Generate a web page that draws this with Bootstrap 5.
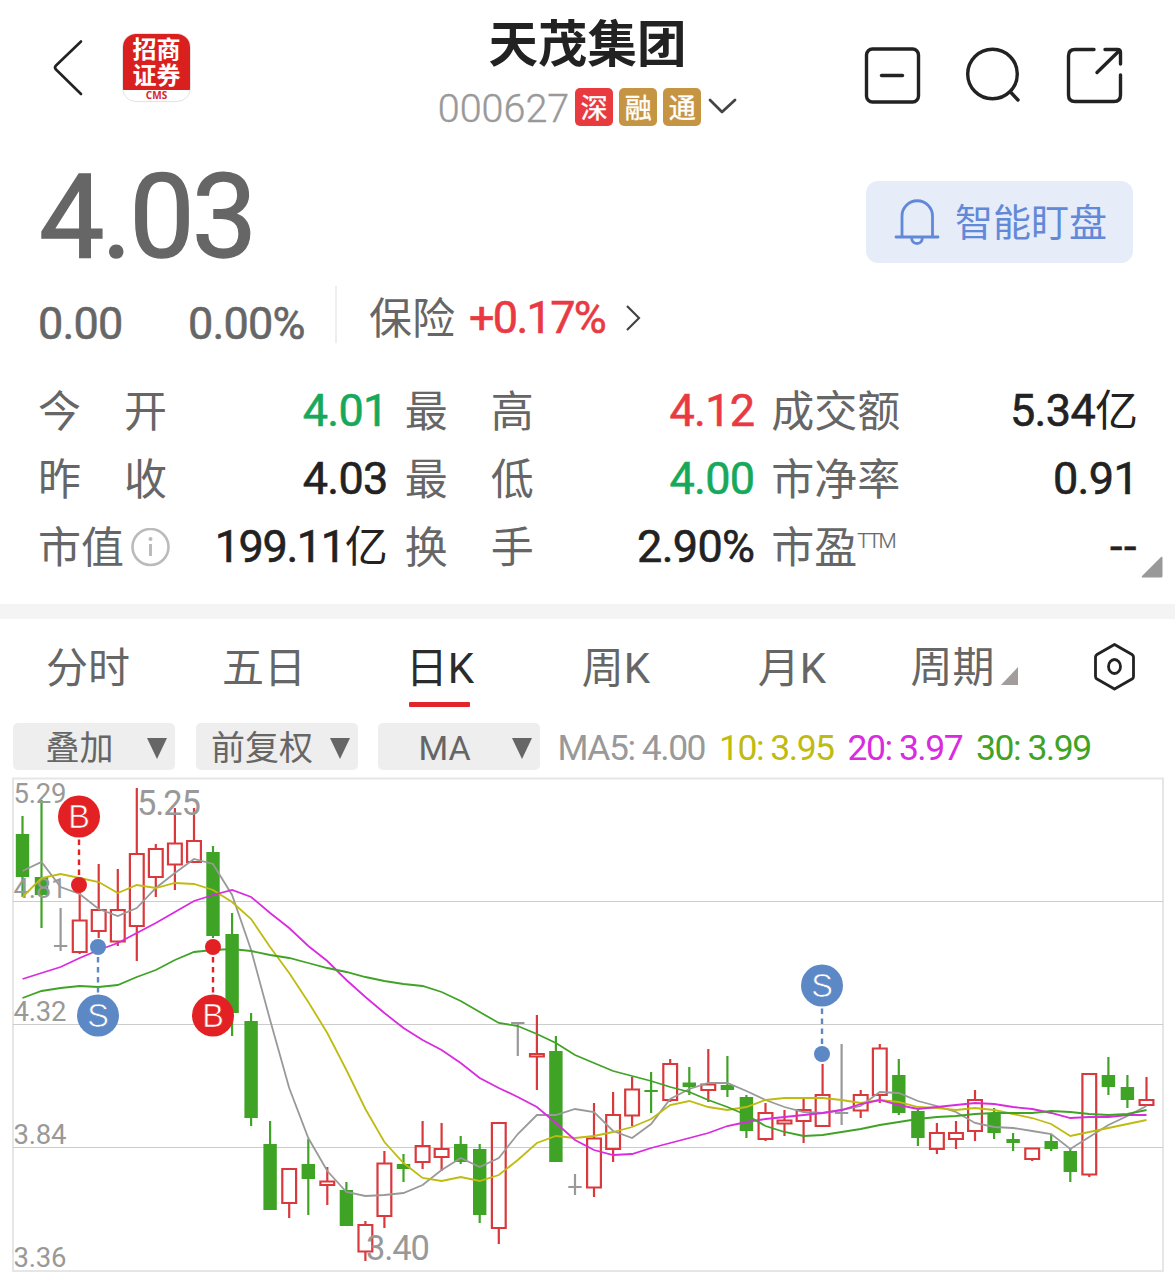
<!DOCTYPE html>
<html lang="zh-CN">
<head>
<meta charset="utf-8">
<meta name="viewport" content="width=device-width, initial-scale=1">
<title>天茂集团 000627</title>
<link rel="stylesheet" href="https://cdn.jsdelivr.net/npm/bootstrap@5.3.0/dist/css/bootstrap.min.css">
<style>
body{font-family:Roboto,"Noto Sans CJK SC",sans-serif;color:#222;background:#fff;width:1175px;height:1275px;overflow:hidden;line-height:1}
svg{display:block;flex:none}
.ink-gray{color:#666}.ink-up{color:#e93a43}.ink-down{color:#17a95b}
.topbar{display:grid;grid-template-columns:1fr auto 1fr;height:150px}
.back-area{padding:33px 0 0 50px;gap:37px}
.app-logo{width:69px;height:69px;border-radius:14px;background:#fff;border:1px solid #e3e3e3;overflow:hidden}
.logo-red{background:#da1f1f;color:#fff;height:57px;font-weight:700;font-size:24px;line-height:26px;padding-top:4px;text-align:center;margin:-1px -1px 0}
.logo-cms{color:#d8262b;font:700 10px/10px "Open Sans",sans-serif;text-align:center}
.stock-name{font-size:49.5px;line-height:50px;font-weight:700;padding-top:20px;margin:0}
.stock-code{font-size:39.5px;color:#999;line-height:38px;font-weight:300;-webkit-text-stroke:.4px #999;padding-top:2px;height:38px}
.code-line{gap:6px;margin-top:18px}
.tag{width:38px;height:38px;border-radius:5px;background:#c69544;color:#fff;font-size:27px;line-height:42px;text-align:center;-webkit-text-stroke:.4px #fff}
.tag-sz{background:#e93a40}
.tools{padding:46px 51px 0 0;gap:43px}
.price-row{height:130px;padding:0 42px 0 39px}
.price{font-size:116.5px;line-height:132px;letter-spacing:-3px;color:#666;-webkit-text-stroke:1.4px #666;padding-top:1px}
.watch-btn{width:267px;height:82px;border-radius:12px;background:#e6ecf8;color:#6288d8;border:0;font-size:38px;margin-top:31px;padding:0 0 0 28px;gap:15px}
.watch-btn span{padding-top:2px}
.change-row{height:64px;margin-top:4px;padding-left:38px;font-size:45px;line-height:64px;letter-spacing:-.8px}
.chg-a{width:150px}.chg-b{width:147px;white-space:nowrap}
.chg-a,.chg-b{padding-top:16px}
.chg-a,.chg-b,.sector-chg,.val{-webkit-text-stroke:.6px currentColor}
.vline{width:2px;height:57px;background:#eee;margin-bottom:4px}
.sector{margin-left:32px;padding-top:5px;font-size:43px;letter-spacing:0}
.sector-chg{margin:4px 20px 0 14px;letter-spacing:-1.7px}
.quote{padding:31px 37px 0 38px;height:256px;position:relative}
.cell-q{height:68px;width:33.3333%;padding-right:17px}
.cell-q:nth-child(3n){padding-right:0}
.lab{width:129px;height:63px;font-size:43px;color:#666;line-height:60px;padding-top:3px;white-space:nowrap}
.val{font-size:45px;line-height:60px;letter-spacing:-.7px;padding-top:2px}
.val.tight{letter-spacing:-1.4px}
.val.dashes{letter-spacing:1.5px}
.val i{font-style:normal;font-size:43px;letter-spacing:0;-webkit-text-stroke:0}
.ttm{font-size:21px;font-weight:300;line-height:21px;margin-top:-13px;letter-spacing:-2px;-webkit-text-stroke:.2px #666}
.fold{position:absolute;right:12px;bottom:26px}
.gap-band{height:15px;background:#f4f4f4}
.tabs-k{height:104px}
.tab-k{width:176px;height:97px;font-size:42px;color:#666;line-height:99px;text-align:center;position:relative}
.tab-k.on{color:#2b2b2b}
.tab-k.on::after{content:"";position:absolute;left:57px;bottom:9px;width:61px;height:5px;background:#e1262b;border-radius:1px}
.tri{margin:17px 0 0 6px}
.filters{height:54px;padding-left:13px;align-items:flex-start}
.pick{width:162px;height:47px;border-radius:5px;background:#eee;color:#666;font-size:34px;line-height:47px;margin-right:20.5px;padding-right:7px}
.pick span{flex:1;text-align:center;padding-top:3px}
.pick svg{margin-top:2px}
.legend-ma{font-size:35.5px;line-height:50px;letter-spacing:-1.5px;white-space:nowrap;gap:14px;margin-left:-3px}
</style>
<script src="https://cdn.jsdelivr.net/npm/bootstrap@5.3.0/dist/js/bootstrap.bundle.min.js"></script>
</head>
<body>
<header class="topbar">
  <div class="back-area d-flex align-items-start">
    <svg width="35" height="69" viewBox="0 0 35 69" fill="none" stroke="#222" stroke-width="2.6" stroke-linecap="round"><path d="M31 8.500L6 32.500Q4 34.500 6 36.500L31 61"/></svg>
    <div class="app-logo"><div class="logo-red">招商<br>证券</div><div class="logo-cms">CMS</div></div>
  </div>
  <div class="d-flex flex-column align-items-center">
    <h1 class="stock-name">天茂集团</h1>
    <div class="code-line d-flex align-items-center">
      <span class="stock-code">000627</span><span class="tag tag-sz">深</span><span class="tag">融</span><span class="tag">通</span>
      <svg width="30" height="18" viewBox="0 0 30 18" fill="none" stroke="#444" stroke-width="2.800" stroke-linecap="round" stroke-linejoin="round"><path d="M3 2L15 14L28 2"/></svg>
    </div>
  </div>
  <div class="tools d-flex justify-content-end align-items-start">
    <svg width="58" height="58" viewBox="0 0 58 58" fill="none" stroke="#222" stroke-width="3.400" stroke-linecap="round"><rect x="2.500" y="3" width="52" height="53" rx="6"/><path d="M17.500 29.500H38.500"/></svg>
    <svg width="58" height="58" viewBox="0 0 58 58" fill="none" stroke="#222" stroke-width="3.400" stroke-linecap="round"><circle cx="27.500" cy="28" r="24.800"/><path d="M45.500 46L53 54"/></svg>
    <svg width="58" height="58" viewBox="0 0 58 58" fill="none" stroke="#222" stroke-width="3.400" stroke-linecap="round" stroke-linejoin="round"><path d="M28 3.500H9Q2.500 3.500 2.500 10V49Q2.500 55.500 9 55.500H48Q54.500 55.500 54.500 49V29M39 3.500H51.500Q54.500 3.500 54.500 6.500V18M53 5L31 26.500"/></svg>
  </div>
</header>
<section class="price-row d-flex justify-content-between align-items-start">
  <div class="price">4.03</div>
  <button class="watch-btn d-flex align-items-center">
    <svg width="46" height="50" viewBox="0 0 46 50" fill="none" stroke="#6288d8" stroke-width="2.800" stroke-linecap="round"><path d="M2 40H44M8 40V19A15 15 0 0 1 38.500 19V40M17.500 40.500Q18 46.500 23 46.500T28.500 40.500"/></svg>
    <span>智能盯盘</span>
  </button>
</section>
<section class="change-row d-flex align-items-center ink-gray">
  <div class="chg-a">0.00</div><div class="chg-b">0.00%</div><div class="vline"></div>
  <div class="sector">保险</div><div class="sector-chg ink-up">+0.17%</div>
  <svg class="mt-1" width="16" height="28" viewBox="0 0 16 28" fill="none" stroke="#444" stroke-width="2.200"><path d="M2 2L14 14L2 26"/></svg>
</section>
<section class="quote d-flex flex-wrap align-content-start">
  <div class="cell-q d-flex justify-content-between"><div class="lab d-flex justify-content-between"><span>今</span><span>开</span></div><div class="val ink-down">4.01</div></div>
  <div class="cell-q d-flex justify-content-between"><div class="lab d-flex justify-content-between"><span>最</span><span>高</span></div><div class="val ink-up">4.12</div></div>
  <div class="cell-q d-flex justify-content-between"><div class="lab">成交额</div><div class="val">5.34<i>亿</i></div></div>
  <div class="cell-q d-flex justify-content-between"><div class="lab d-flex justify-content-between"><span>昨</span><span>收</span></div><div class="val">4.03</div></div>
  <div class="cell-q d-flex justify-content-between"><div class="lab d-flex justify-content-between"><span>最</span><span>低</span></div><div class="val ink-down">4.00</div></div>
  <div class="cell-q d-flex justify-content-between"><div class="lab">市净率</div><div class="val">0.91</div></div>
  <div class="cell-q d-flex justify-content-between"><div class="lab d-flex align-items-center"><span>市值</span>
    <svg width="42" height="40" viewBox="0 0 42 40" class="ms-1" fill="none" stroke="#bbb" stroke-width="2.600"><circle cx="22.500" cy="19" r="18"/><path d="M22.500 16V28" stroke-width="3"/><circle cx="22.500" cy="11" r="2" fill="#bbb" stroke="none"/></svg></div><div class="val tight">199.11<i>亿</i></div></div>
  <div class="cell-q d-flex justify-content-between"><div class="lab d-flex justify-content-between"><span>换</span><span>手</span></div><div class="val">2.90%</div></div>
  <div class="cell-q d-flex justify-content-between"><div class="lab d-flex align-items-center"><span>市盈</span><span class="ttm">TTM</span></div><div class="val dashes">--</div></div>
  <svg class="fold" width="22" height="22" viewBox="0 0 22 22"><path d="M20 1Q21.500 0 21.500 2V20Q21.500 21.500 20 21.500H1.500Q0 21.500 1 20Z" fill="#999"/></svg>
</section>
<div class="gap-band"></div>
<nav class="tabs-k d-flex">
  <div class="tab-k">分时</div><div class="tab-k">五日</div><div class="tab-k on">日K</div><div class="tab-k">周K</div><div class="tab-k">月K</div>
  <div class="tab-k d-flex justify-content-center align-items-center pe-2"><span>周期</span><svg class="tri" width="17" height="18" viewBox="0 0 17 18"><path d="M17 0V18H0Z" fill="#a39c9c"/></svg></div>
  <svg width="46" height="50" viewBox="0 0 46 50" style="margin:23px 0 0 36px" fill="none" stroke="#222" stroke-width="2.800" stroke-linejoin="round"><path d="M22.500 2.500L40 12.500Q41.500 13.500 41.500 15V34.500Q41.500 36 40 37L22.500 47L5 37Q3.500 36 3.500 34.500V15Q3.500 13.500 5 12.500Z"/><ellipse cx="22.500" cy="24.500" rx="6" ry="7"/></svg>
</nav>
<section class="filters d-flex">
  <div class="pick d-flex align-items-center"><span>叠加</span><svg width="22" height="22" viewBox="0 0 22 22"><path d="M1 1H21L11 22Z" fill="#666"/></svg></div>
  <div class="pick d-flex align-items-center"><span>前复权</span><svg width="22" height="22" viewBox="0 0 22 22"><path d="M1 1H21L11 22Z" fill="#666"/></svg></div>
  <div class="pick d-flex align-items-center"><span>MA</span><svg width="22" height="22" viewBox="0 0 22 22"><path d="M1 1H21L11 22Z" fill="#666"/></svg></div>
  <div class="legend-ma d-flex"><span style="color:#999">MA5: 4.00</span><span style="color:#bfbb10">10: 3.95</span><span style="color:#d92bdf">20: 3.97</span><span style="color:#3fa326">30: 3.99</span></div>
</section>
<svg id="kline" width="1175" height="498" viewBox="0 777 1175 498" font-family="Roboto, sans-serif"></svg>
<script>
// One row per session: [kind, high, body top, body bottom, low]; r = rise, g = fall, n = unchanged
const bars=[
['g',816,834,877,897],['g',800,877,895,928],['n',908,946,946,951],['r',892,920.5,952,954],['r',864,910,931,938],
['r',869,910,941.5,946],['r',788,854,926,961],['r',844,849,877,897],['r',808,843.5,864.5,890],['r',808,841,862,862],
['g',846,852,936,938],['g',913,934,1013,1036],['g',1013,1021,1118,1126],['g',1121,1144,1210,1210],['r',1169,1169,1203,1218],
['g',1139,1164,1179,1215],['r',1167,1181.500,1185,1205],['g',1182,1190,1226,1226],['r',1221,1225,1251.500,1261],['r',1151,1163.500,1216,1228],
['g',1154,1164,1169,1182],['r',1121,1146,1162,1169],['r',1123,1149,1157,1171],['g',1136,1144,1162,1164],['g',1144,1149,1215,1223],
['r',1123,1123,1228,1244],['n',1023,1023,1023,1056],['r',1015,1054,1056.500,1090],['g',1036,1051,1162,1162],['n',1174,1187,1187,1195],
['r',1103,1138.500,1187.500,1197],['r',1092,1115,1149,1162],['r',1077,1089.500,1115.500,1126],['g',1072,1090,1092,1113],['r',1059,1064,1100,1102],
['g',1067,1082.500,1087,1095],['r',1049,1084.500,1090,1102],['g',1056,1085,1090,1097],['g',1095,1097,1131,1138],['r',1103,1113,1139,1141],
['r',1110,1120.500,1123.500,1136],['r',1097,1110,1121,1143],['r',1064,1095,1126,1126],['n',1044,1113,1113,1125],['r',1090,1095,1110.500,1118],
['r',1044,1048.500,1095,1103],['g',1059,1075,1113,1115],['g',1110,1111,1138,1146],['r',1123,1133,1149,1154],['r',1121,1133,1139,1149],
['r',1090,1100,1131,1141],['g',1108,1113,1133,1139],['g',1133,1139,1143,1151],['r',1148.500,1148.500,1159,1161],['g',1134,1141,1149,1151],
['g',1149,1151,1172,1182],['r',1074,1074,1174.500,1177],['g',1057,1075,1087,1095],['g',1075,1087,1100,1108],['r',1077,1100,1105,1106]];
const lines={
'#999':[871,862,887,894,909,916,908,888,873,859,864,895,950,1020,1088,1138,1171,1192,1196,1195,1193,1185,1170,1158,1167,1158,1134,1115,1115,1109,1112,1131,1138,1124,1099,1089,1083,1083,1091,1100,1107,1112,1113,1110,1106,1092,1093,1101,1106,1112,1123,1127,1128,1131,1134,1149,1137,1125,1116,1106],
'#bfbb10':[897,878,874,878,882,893,885,888,883,884,890,902,919,947,973,1002,1033,1070,1109,1142,1163,1178,1181,1177,1181,1175,1160,1143,1136,1138,1136,1132,1127,1119,1105,1101,1107,1110,1107,1100,1098,1098,1098,1100,1103,1100,1102,1107,1108,1110,1108,1110,1114,1118,1124,1136,1132,1128,1124,1120],
'#d92bdf':[979,973,967,958,950,943,933,923,912,901,895,890,897,913,928,946,961,980,997,1013,1028,1040,1050,1063,1078,1088,1097,1107,1123,1140,1150,1155,1154,1148,1143,1138,1133,1126,1122,1119,1117,1115,1113,1110,1104,1100,1105,1109,1107,1105,1103,1104,1107,1109,1113,1118,1117,1117,1115,1115],
'#3fa326':[998,991,988,986,987,985,977,970,960,952,950,949,951,955,958,963,968,972,977,981,984,986,992,1001,1012,1023,1026,1034,1043,1055,1063,1071,1076,1081,1087,1092,1100,1107,1115,1126,1132,1136,1135,1132,1129,1125,1122,1119,1117,1116,1114,1113,1113,1113,1111,1112,1114,1115,1114,1110]};
const X=i=>+(22.5+19.05*i).toFixed(1);
let out='<rect x="13" y="778.500" width="1150" height="492.500" fill="none" stroke="#e6e6e6" stroke-width="2"/>';
for(const y of [901.5,1024.5,1147.5]) out+=`<path d="M13 ${y}H1163" stroke="#ccc"/>`;
bars.forEach(([k,h,t,b,l],i)=>{
  const x=X(i);
  if(k=='g') out+=`<path d="M${x} ${h}V${l}" stroke="#3fa326" stroke-width="2.200"/><rect x="${x-6.7}" y="${t}" width="13.4" height="${b-t}" fill="#3fa326"/>`;
  else if(k=='r') out+=`<path d="M${x} ${h}V${t}M${x} ${b}V${l}M${x-6.9} ${t}h13.800V${b}h-13.800Z" fill="none" stroke="#d9393c" stroke-width="2.200"/>`;
  else out+=`<path d="M${x} ${h}V${l}M${x-6.7} ${t}h13.400" stroke="#999" stroke-width="2.200"/>`;
});
const label=(x,y,s,t,w)=>`<text x="${x}" y="${y}" font-size="${s}" fill="#999" textLength="${w}">${t}</text>`;
out+=label(13.5,803,27.5,'5.29',53)+label(13.5,898,27.5,'4.81',53)+label(13.5,1021,27.5,'4.32',53)+label(13.5,1144,27.5,'3.84',53)+label(13.5,1267,27.5,'3.36',53);
out+=label(137,815,34.500,'5.25',64)+label(366,1259.500,34.500,'3.40',64);
for(const c in lines) out+=`<polyline points="${lines[c].map((y,i)=>X(i)+','+y).join(' ')}" fill="none" stroke="${c}" stroke-width="1.800"/>`;
// Trade markers: letter, x, badge centre, dot centre
for(const [t,x,yb,yd] of [['B',79,816.5,885],['S',98,1015.5,947],['B',213,1015.5,947],['S',822,985.5,1054]]){
  const c=t=='B'?'#e32023':'#5c88c5', s=Math.sign(yd-yb);
  out+=`<path d="M${x} ${yb+s*23}V${yd}" stroke="${c}" stroke-width="2.400" stroke-dasharray="5.500 4.500"/><circle cx="${x}" cy="${yd}" r="8" fill="${c}"/><circle cx="${x}" cy="${yb}" r="21" fill="${c}"/><text x="${x}" y="${yb+11.5}" font-family="Liberation Sans, sans-serif" font-size="32.500" fill="#fff" stroke="${c}" stroke-width=".7" text-anchor="middle">${t}</text>`;
}
document.getElementById('kline').innerHTML=out;
</script>
</body>
</html>
